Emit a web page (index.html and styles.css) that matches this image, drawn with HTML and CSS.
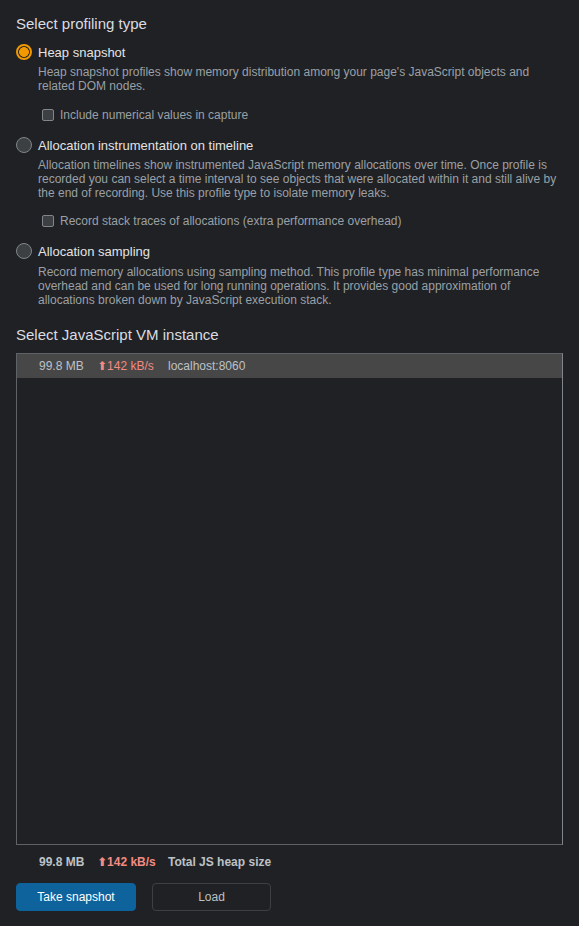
FILE: index.html
```html
<!DOCTYPE html>
<html>
<head>
<meta charset="utf-8">
<link rel="stylesheet" href="styles.css">
</head>
<body>
<div class="panel">
  <h2 class="heading">Select profiling type</h2>

  <div class="option">
    <div class="radio-row"><span class="radio checked"></span><span class="label">Heap snapshot</span></div>
    <div class="desc">Heap snapshot profiles show memory distribution among your page's JavaScript objects and related DOM nodes.</div>
    <div class="check-row"><span class="checkbox"></span><span class="check-label">Include numerical values in capture</span></div>
  </div>

  <div class="option">
    <div class="radio-row"><span class="radio"></span><span class="label">Allocation instrumentation on timeline</span></div>
    <div class="desc">Allocation timelines show instrumented JavaScript memory allocations over time. Once profile is recorded you can select a time interval to see objects that were allocated within it and still alive by the end of recording. Use this profile type to isolate memory leaks.</div>
    <div class="check-row check-row-2"><span class="checkbox"></span><span class="check-label">Record stack traces of allocations (extra performance overhead)</span></div>
  </div>

  <div class="option">
    <div class="radio-row"><span class="radio"></span><span class="label">Allocation sampling</span></div>
    <div class="desc desc-last">Record memory allocations using sampling method. This profile type has minimal performance overhead and can be used for long running operations. It provides good approximation of allocations broken down by JavaScript execution stack.</div>
  </div>

  <h2 class="heading heading-vm">Select JavaScript VM instance</h2>

  <div class="vm-list">
    <div class="vm-row selected">
      <span class="col col-size">99.8 MB</span>
      <span class="col col-rate"><span class="arrow">⬆</span>142 kB/s</span>
      <span class="col col-name">localhost:8060</span>
    </div>
  </div>

  <div class="summary">
    <span class="col col-size">99.8 MB</span>
    <span class="col col-rate"><span class="arrow">⬆</span>142 kB/s</span>
    <span class="col col-name">Total JS heap size</span>
  </div>

  <div class="buttons">
    <button class="btn btn-primary">Take snapshot</button>
    <button class="btn btn-secondary">Load</button>
  </div>
</div>
</body>
</html>
```

FILE: styles.css
```css
html, body {
  margin: 0;
  padding: 0;
  background: #202124;
  height: 100%;
}
body {
  font-family: "Liberation Sans", Arial, sans-serif;
  color: #e3e3e3;
}
.panel {
  padding: 15px 16px 0 16px;
}
.heading {
  margin: 0;
  font-size: 15px;
  font-weight: normal;
  line-height: 18px;
  color: #dadce0;
}
.heading-vm {
  margin-top: 19px;
}
.option {
  margin-top: 10px;
}
.option:first-of-type {
  margin-top: 9px;
}
.radio-row {
  display: flex;
  align-items: center;
  height: 20px;
}
.radio {
  box-sizing: border-box;
  width: 16px;
  height: 16px;
  border-radius: 50%;
  background: #3c4043;
  border: 1px solid #80868b;
  flex: none;
}
.radio.checked {
  border: 2px solid #f29900;
  background: radial-gradient(circle, #f29900 0 4.6px, #202124 5.2px);
}
.label {
  margin-left: 6px;
  font-size: 13px;
  color: #e3e3e3;
}
.desc {
  margin-top: 3px;
  padding-left: 22px;
  font-size: 12px;
  line-height: 14px;
  color: #9aa0a6;
}
.desc-last {
  margin-top: 4px;
}
.check-row {
  display: flex;
  align-items: center;
  height: 20px;
  margin-top: 12px;
  padding-left: 26px;
}
.check-row-2 {
  margin-top: 11px;
}
.checkbox {
  box-sizing: border-box;
  width: 12px;
  height: 12px;
  border: 1px solid #80868b;
  border-radius: 2px;
  background: #3c4043;
  flex: none;
}
.check-label {
  margin-left: 6px;
  font-size: 12px;
  color: #9aa0a6;
}
.vm-list {
  margin-top: 9px;
  box-sizing: border-box;
  height: 492px;
  border: 1px solid #5f6368;
  border-right-color: #80868b;
}
.vm-row {
  display: flex;
  align-items: center;
  height: 24px;
  padding-left: 22px;
  font-size: 12px;
  color: #bdc1c6;
}
.vm-row.selected {
  background: #474747;
}
.col {
  display: inline-block;
  white-space: nowrap;
}
.col-size {
  width: 58px;
}
.col-rate {
  width: 71px;
  color: #f28b82;
}
.arrow {
  font-family: "DejaVu Sans", sans-serif;
  font-size: 12px;
}
.summary {
  display: flex;
  align-items: center;
  margin-top: 10px;
  height: 14px;
  padding-left: 23px;
  font-size: 12px;
  font-weight: bold;
  color: #bdc1c6;
}
.summary .col-rate {
  color: #f28b82;
}
.buttons {
  display: flex;
  margin-top: 14px;
}
.btn {
  box-sizing: border-box;
  height: 28px;
  border-radius: 4px;
  font-family: "Liberation Sans", Arial, sans-serif;
  font-size: 12px;
  cursor: pointer;
}
.btn-primary {
  width: 120px;
  background: #0e639c;
  border: 1px solid #0e639c;
  color: #ffffff;
}
.btn-secondary {
  width: 119px;
  margin-left: 16px;
  background: #202124;
  border: 1px solid #3c4043;
  color: #bdc1c6;
}
```
